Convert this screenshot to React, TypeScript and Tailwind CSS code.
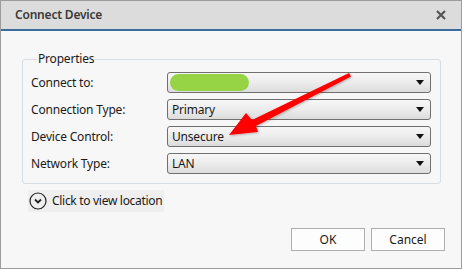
import React from "react";

function Combo({ children }: { children?: React.ReactNode }) {
  return (
    <div className="relative w-[264px] h-[21px] rounded-[3px] border border-[#707070] bg-gradient-to-b from-[#f7f7f7] via-[#ececec] to-[#dcdcdc] flex items-center pl-[4px] text-[12px] tracking-[-0.2px] text-[#1a1a1a]">
      <span className="flex-1 leading-none">{children}</span>
      <svg width="8" height="5" viewBox="0 0 8 5" className="mr-[6px]">
        <path d="M0 0 L8 0 L4 5 Z" fill="#111" />
      </svg>
    </div>
  );
}

function Row({ label, children }: { label: string; children?: React.ReactNode }) {
  return (
    <div className="flex items-center h-[21px]">
      <div className="w-[136px] text-[12px] tracking-[-0.2px] text-[#1a1a1a]">{label}</div>
      <Combo>{children}</Combo>
    </div>
  );
}

export default function App() {
  return (
    <div
      className="relative w-[462px] h-[269px] flex flex-col bg-[#f7f7f7] border border-[#9c9c9c]"
      style={{ fontFamily: '"Noto Sans", "Open Sans", sans-serif' }}
    >
      <div className="h-[30px] shrink-0 bg-[#dcdcdc] border-b-2 border-[#3b6c9e] flex items-center justify-between pl-[14px] pr-[15px]">
        <span className="text-[12px] font-semibold tracking-[-0.2px] text-[#3a3a3a]">Connect Device</span>
        <svg width="10" height="10" viewBox="0 0 10 10">
          <path d="M1 1 L9 9 M9 1 L1 9" stroke="#555" strokeWidth="2.2" />
        </svg>
      </div>
      <div className="flex-1 flex flex-col pl-[21px]">
        <fieldset className="mt-[20px] w-[419px] border border-[#d6dee3] rounded-[3px] pl-[8px] pb-[9px] pt-[5px]">
          <legend className="ml-[6px] px-[1px] text-[12px] tracking-[-0.2px] text-[#1a1a1a] leading-[16px]">Properties</legend>
          <div className="flex flex-col gap-[6px]">
            <Row label="Connect to:">
              <span className="block w-[79px] h-[17px] rounded-full bg-[#96d446] -ml-[2px]" />
            </Row>
            <Row label="Connection Type:">Primary</Row>
            <Row label="Device Control:">Unsecure</Row>
            <Row label="Network Type:">LAN</Row>
          </div>
        </fieldset>
        <div className="mt-[6px] ml-[6px] self-start h-[22px] flex items-center gap-[5px] bg-[#efefef] pl-[1px] pr-[2px] text-[12px] tracking-[-0.3px] text-[#1a1a1a]">
          <svg width="18" height="18" viewBox="0 0 18 18">
            <circle cx="9" cy="9" r="8" fill="none" stroke="#222" strokeWidth="1.2" />
            <path d="M6 7.5 L9 10.5 L12 7.5" fill="none" stroke="#222" strokeWidth="1.8" />
          </svg>
          <span>Click to view location</span>
        </div>
        <div className="mt-[16px] flex justify-end gap-[6px] pr-[16px]">
          <button className="w-[74px] h-[23px] border border-[#adadad] bg-[#fdfdfd] text-[12px] text-[#1a1a1a]">OK</button>
          <button className="w-[74px] h-[23px] border border-[#adadad] bg-[#fdfdfd] text-[12px] text-[#1a1a1a]">Cancel</button>
        </div>
      </div>
      <svg className="absolute left-0 top-0 pointer-events-none" width="462" height="269">
        <defs>
          <filter id="sh" x="-20%" y="-20%" width="140%" height="140%">
            <feDropShadow dx="1" dy="1" stdDeviation="1" floodColor="#000" floodOpacity="0.25" />
          </filter>
        </defs>
        <polygon
          points="228,134 245,112 251,119 348,72 350,75.5 255,125 257,131"
          fill="#ff0000"
          filter="url(#sh)"
        />
      </svg>
    </div>
  );
}
